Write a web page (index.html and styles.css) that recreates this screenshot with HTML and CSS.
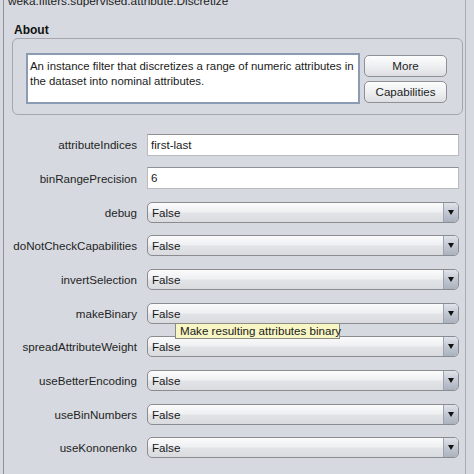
FILE: index.html
```html
<!DOCTYPE html>
<html>
<head>
<meta charset="utf-8">
<link rel="stylesheet" href="styles.css">
</head>
<body>
<div class="window">
  <div class="title">weka.filters.supervised.attribute.Discretize</div>
  <div class="about-label">About</div>
  <div class="about-box">
    <div class="about-text">An instance filter that discretizes a range of numeric attributes in the dataset into nominal attributes.</div>
    <div class="about-buttons">
      <div class="btn">More</div>
      <div class="btn">Capabilities</div>
    </div>
  </div>
  <div class="props">
    <div class="label">attributeIndices</div><div class="field">first-last</div>
    <div class="label">binRangePrecision</div><div class="field">6</div>
    <div class="label">debug</div><div class="combo"><span class="val">False</span><span class="arrow"></span></div>
    <div class="label">doNotCheckCapabilities</div><div class="combo"><span class="val">False</span><span class="arrow"></span></div>
    <div class="label">invertSelection</div><div class="combo"><span class="val">False</span><span class="arrow"></span></div>
    <div class="label">makeBinary</div><div class="combo"><span class="val">False</span><span class="arrow"></span></div>
    <div class="label">spreadAttributeWeight</div><div class="combo"><span class="val">False</span><span class="arrow"></span></div>
    <div class="label">useBetterEncoding</div><div class="combo"><span class="val">False</span><span class="arrow"></span></div>
    <div class="label">useBinNumbers</div><div class="combo"><span class="val">False</span><span class="arrow"></span></div>
    <div class="label">useKononenko</div><div class="combo"><span class="val">False</span><span class="arrow"></span></div>
  </div>
  <div class="tooltip">Make resulting attributes binary</div>
</div>
</body>
</html>
```
FILE: styles.css
```css
html, body {
  margin: 0;
  padding: 0;
  width: 474px;
  height: 474px;
  overflow: hidden;
  background: #d6d9df;
  font-family: "Liberation Sans", Arial, sans-serif;
  color: #1f1f1f;
}
.window {
  position: relative;
  display: flow-root;
  margin-left: 3px;
  width: 463px;
  height: 474px;
  box-sizing: border-box;
  border-left: 1px solid #8f9298;
  border-right: 1px solid #a9acb2;
}
.title {
  font-size: 11.8px;
  line-height: 14px;
  margin-top: -6px;
  padding-left: 4px;
  color: #222;
}
.about-label {
  font-size: 12px;
  font-weight: bold;
  line-height: 14px;
  margin-top: 15px;
  padding-left: 10px;
  color: #111;
}
.about-box {
  margin: 1px 0 0 8px;
  width: 451px;
  height: 77px;
  box-sizing: border-box;
  border: 1px solid #a4a7ad;
  border-radius: 6px;
  display: flex;
  align-items: flex-start;
  padding: 14px 0 0 13px;
  gap: 4px;
}
.about-text {
  width: 334px;
  height: 51px;
  box-sizing: border-box;
  background: #fff;
  border: 2px solid #8b9bb3;
  font-size: 11.4px;
  line-height: 15px;
  padding: 4px 0 4px 2px;
  color: #1a1a1a;
}
.about-buttons {
  display: flex;
  flex-direction: column;
  gap: 4px;
  padding-top: 2px;
}
.btn {
  width: 83px;
  height: 22px;
  box-sizing: border-box;
  border: 1px solid #8d9094;
  border-radius: 5px;
  background: linear-gradient(#fdfdfd, #eceef0 55%, #dcdee2);
  font-size: 11.6px;
  line-height: 20px;
  text-align: center;
  color: #222;
}
.props {
  margin-top: 13px;
  display: grid;
  grid-template-columns: 133px 312px;
  column-gap: 10px;
  grid-auto-rows: 33.67px;
  align-items: center;
}
.label {
  text-align: right;
  font-size: 11.6px;
  color: #1f1f1f;
}
.field {
  height: 22px;
  box-sizing: border-box;
  background: #fff;
  border: 1px solid #b9bbbf;
  border-top-color: #8e9094;
  font-size: 11.6px;
  line-height: 20px;
  padding-left: 3px;
  color: #1a1a1a;
}
.combo {
  height: 21px;
  box-sizing: border-box;
  border: 1px solid #8a8c90;
  border-radius: 5px;
  background: linear-gradient(#fbfbfc, #eff0f2 45%, #e2e3e6 55%, #d9dbde);
  display: flex;
  align-items: center;
  font-size: 11.6px;
  color: #1a1a1a;
  overflow: hidden;
}
.val {
  flex: 1;
  padding-left: 4px;
}
.arrow {
  width: 15px;
  height: 100%;
  box-sizing: border-box;
  border-left: 1px solid #9ea4ae;
  background: linear-gradient(#dfe3ea, #c2c8d2 50%, #aab2be);
  display: flex;
  align-items: center;
  justify-content: center;
}
.arrow::before {
  content: "";
  width: 0;
  height: 0;
  border-left: 3.5px solid transparent;
  border-right: 3.5px solid transparent;
  border-top: 5px solid #111;
}
.tooltip {
  position: absolute;
  left: 171px;
  top: 323px;
  width: 165px;
  height: 16px;
  box-sizing: border-box;
  background: #f7f6c4;
  border: 1px solid #8c8c80;
  font-size: 11.6px;
  line-height: 14px;
  padding-left: 4px;
  color: #1a1a1a;
  white-space: nowrap;
}
```
